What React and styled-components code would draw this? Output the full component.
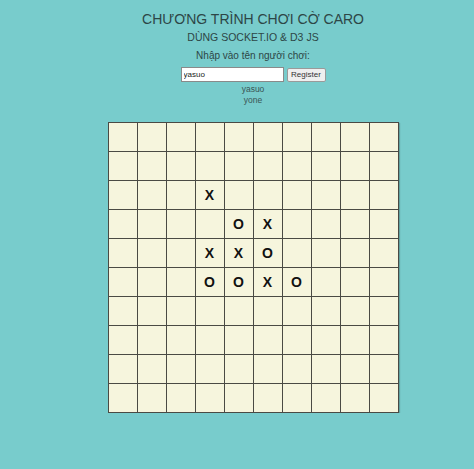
import React from "react";
import { styled, createGlobalStyle } from "styled-components";

const GlobalStyle = createGlobalStyle`
    body {
        margin: 0;
        background-color: #78cccc;
        font-family: "Liberation Sans", Arial, sans-serif;
    }
`;

const board = [
    "..........",
    "..........",
    "...X......",
    "....OX....",
    "...XXO....",
    "...OOXO...",
    "..........",
    "..........",
    "..........",
    "..........",
];

function App() {
    return (
        <Container>
            <GlobalStyle />
            <Title>CHƯƠNG TRÌNH CHƠI CỜ CARO</Title>
            <SubTitle>DÙNG SOCKET.IO &amp; D3 JS</SubTitle>
            <Label>Nhập vào tên người chơi:</Label>
            <Form>
                <Input defaultValue="yasuo" />
                <Button>Register</Button>
            </Form>
            <Players>
                <Player>yasuo</Player>
                <Player>yone</Player>
            </Players>
            <Board>
                {board.map((row, r) =>
                    row.split("").map((c, i) => (
                        <Cell key={r + "-" + i}>{c === "." ? "" : c}</Cell>
                    ))
                )}
            </Board>
        </Container>
    );
}

export default App;

const Container = styled.div`
    display: flex;
    flex-direction: column;
    align-items: center;
    padding: 11px 0 0 32px;
    color: #2d4646;
`;
const Title = styled.h1`
    margin: 0;
    font-size: 14px;
    line-height: 16px;
    font-weight: normal;
`;
const SubTitle = styled.h2`
    margin: 4px 0 0 0;
    font-size: 10.5px;
    line-height: 13px;
    font-weight: normal;
`;
const Label = styled.p`
    margin: 5px 0 0 0;
    font-size: 10px;
    line-height: 14px;
`;
const Form = styled.div`
    display: flex;
    gap: 3px;
    margin-top: 4px;
`;
const Input = styled.input`
    box-sizing: border-box;
    width: 103px;
    height: 15px;
    padding: 0 2px;
    border: 1px solid #8a8a8a;
    font-family: "Liberation Sans", Arial, sans-serif;
    font-size: 8px;
    color: #222;
    background: #fff;
`;
const Button = styled.button`
    box-sizing: border-box;
    width: 39px;
    height: 14px;
    margin-top: 0.5px;
    padding: 0;
    border: 1px solid #9a9a9a;
    border-radius: 2px;
    background: #efefef;
    font-family: "Liberation Sans", Arial, sans-serif;
    font-size: 8px;
    color: #333;
`;
const Players = styled.div`
    display: flex;
    flex-direction: column;
    align-items: center;
    margin-top: 1.5px;
`;
const Player = styled.span`
    font-size: 8.5px;
    line-height: 11px;
    color: #3a5555;
`;
const Board = styled.div`
    display: grid;
    grid-template-columns: repeat(10, 28px);
    grid-auto-rows: 28px;
    gap: 1px;
    padding: 1px;
    margin-top: 16px;
    background: #4a4a44;
    box-shadow: 1px 1px 1px rgba(0, 0, 0, 0.2);
`;
const Cell = styled.div`
    display: flex;
    align-items: center;
    justify-content: center;
    background: #f6f5dd;
    font-size: 14px;
    font-weight: bold;
    color: #111;
`;
